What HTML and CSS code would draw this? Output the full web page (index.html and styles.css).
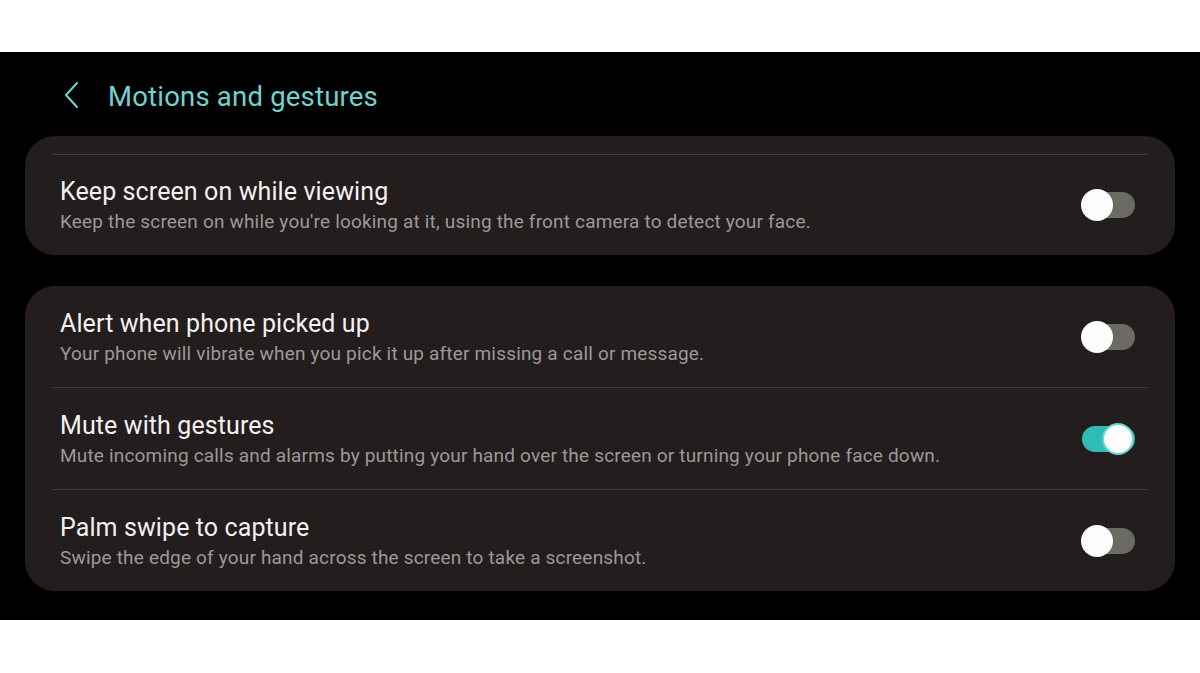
FILE: index.html
```html
<!DOCTYPE html>
<html>
<head>
<meta charset="utf-8">
<link rel="stylesheet" href="styles.css">
</head>
<body>
<div class="screen">
  <div class="header">
    <svg class="back" width="20" height="28" viewBox="0 0 20 28"><path d="M15 2 L4 14 L15 26" fill="none" stroke="#6fd3cf" stroke-width="2" stroke-linecap="round" stroke-linejoin="round"/></svg>
    <div class="title">Motions and gestures</div>
  </div>
  <div class="card card-first">
    <div class="divider top"></div>
    <div class="row">
      <div class="text">
        <div class="name">Keep screen on while viewing</div>
        <div class="desc">Keep the screen on while you're looking at it, using the front camera to detect your face.</div>
      </div>
      <div class="toggle"><div class="track"></div><div class="knob"></div></div>
    </div>
  </div>
  <div class="card">
    <div class="row">
      <div class="text">
        <div class="name">Alert when phone picked up</div>
        <div class="desc">Your phone will vibrate when you pick it up after missing a call or message.</div>
      </div>
      <div class="toggle"><div class="track"></div><div class="knob"></div></div>
    </div>
    <div class="divider"></div>
    <div class="row">
      <div class="text">
        <div class="name">Mute with gestures</div>
        <div class="desc">Mute incoming calls and alarms by putting your hand over the screen or turning your phone face down.</div>
      </div>
      <div class="toggle on"><div class="track"></div><div class="knob"></div></div>
    </div>
    <div class="divider"></div>
    <div class="row">
      <div class="text">
        <div class="name">Palm swipe to capture</div>
        <div class="desc">Swipe the edge of your hand across the screen to take a screenshot.</div>
      </div>
      <div class="toggle"><div class="track"></div><div class="knob"></div></div>
    </div>
  </div>
</div>
</body>
</html>
```
FILE: styles.css
```css
html, body {
  margin: 0;
  padding: 0;
  background: #ffffff;
  font-family: Roboto, "Noto Sans", sans-serif;
}
.screen {
  margin-top: 52px;
  height: 568px;
  background: #000000;
  padding: 0 25px;
  box-sizing: border-box;
  display: flex;
  flex-direction: column;
}
.header {
  height: 84px;
  display: flex;
  align-items: center;
  padding-left: 37px;
  padding-top: 4px;
  box-sizing: border-box;
}
.back {
  display: block;
  margin-top: -2px;
}
.title {
  margin-left: 26px;
  font-size: 27.5px;
  color: #6fd3cf;
  letter-spacing: 0.2px;
}
.card {
  background: #231d1d;
  border-radius: 30px;
  display: flex;
  flex-direction: column;
}
.card-first {
  padding-top: 18px;
  margin-bottom: 31px;
}
.divider {
  height: 1px;
  background: #433b3b;
  margin: 0 28px;
}
.row {
  height: 101px;
  display: flex;
  align-items: center;
  padding: 2px 40px 0 35px;
  box-sizing: border-box;
}
.card-first .row {
  height: 100px;
}
.text {
  flex: 1;
}
.name {
  font-size: 25px;
  line-height: 32px;
  color: #f3f1f1;
  letter-spacing: 0.1px;
}
.desc {
  font-size: 19px;
  line-height: 28px;
  color: #9e9898;
  letter-spacing: 0.18px;
}
.toggle {
  position: relative;
  width: 56px;
  height: 34px;
  margin-top: -2px;
}
.track {
  position: absolute;
  left: 3px;
  top: 4px;
  width: 53px;
  height: 26px;
  border-radius: 13px;
  background: #6b6b66;
}
.knob {
  position: absolute;
  left: 2px;
  top: 1px;
  width: 32px;
  height: 32px;
  border-radius: 50%;
  background: #fcfcfc;
  box-sizing: border-box;
}
.toggle.on .track {
  background: #2fbbb8;
}
.toggle.on .knob {
  left: 23px;
  border: 2px solid #5cd6cf;
}
```
